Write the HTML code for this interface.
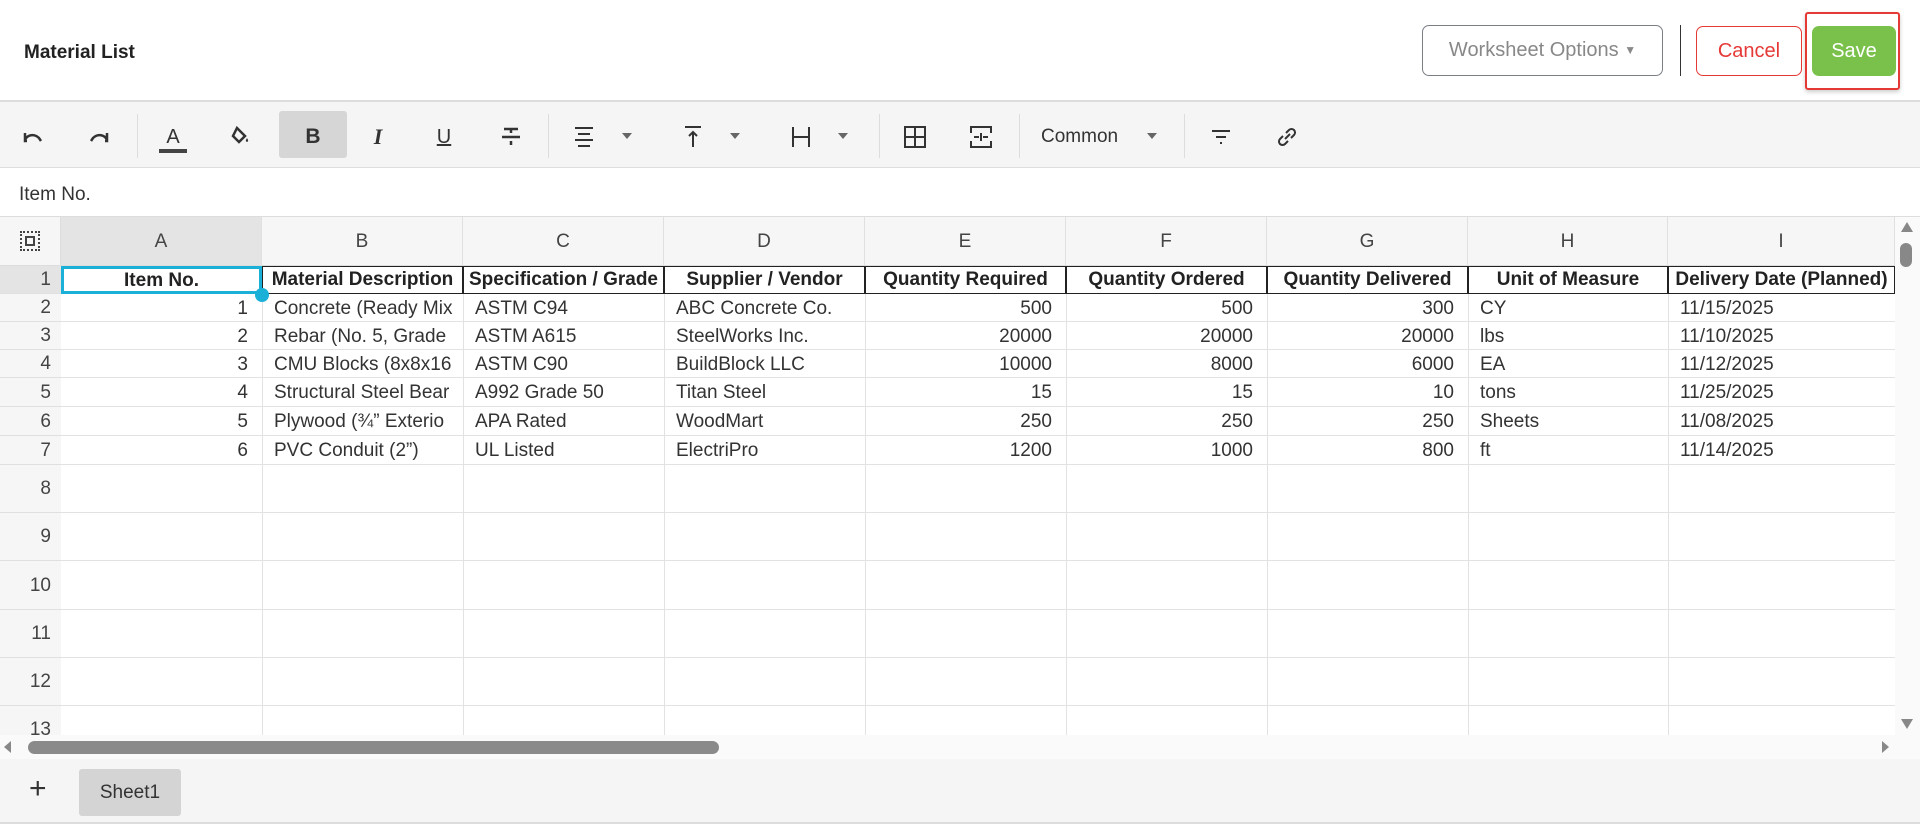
<!DOCTYPE html>
<html><head><meta charset="utf-8"><style>
*{box-sizing:border-box;margin:0;padding:0}
body{width:1920px;height:827px;overflow:hidden;background:#fff;font-family:"Liberation Sans",Arial,sans-serif;color:#333;position:relative}
.a{position:absolute}
.ic{position:absolute;top:122px;width:30px;height:30px;display:flex;align-items:center;justify-content:center}
.sep{position:absolute;top:114px;width:1px;height:44px;background:#ddd}
.car{position:absolute;top:133px;width:0;height:0;border-left:5px solid transparent;border-right:5px solid transparent;border-top:6px solid #666}
.ch{position:absolute;top:217px;height:49px;line-height:49px;text-align:center;font-size:19px;color:#444;border-right:1px solid #e0e0e0;background:#f6f6f6;border-bottom:1px solid #ddd}
.rh{position:absolute;left:0;width:61px;text-align:right;padding-right:10px;font-size:19px;color:#444;background:#f6f6f6;border-bottom:1px solid #e0e0e0}
.c{position:absolute;font-size:19px;color:#333;white-space:nowrap;overflow:hidden;padding:0 12px}
.h{font-weight:bold;text-align:center;padding:0;border:1.5px solid #222;color:#222}
.r{text-align:right}
.vl{position:absolute;top:266px;width:1px;height:470px;background:#e2e2e2}
.hl{position:absolute;left:61px;width:1834px;height:1px;background:#e2e2e2}
</style></head><body>
<div class="a" style="left:24px;top:42px;font-size:19px;font-weight:bold;color:#222">Material List</div>
<div class="a" style="left:1422px;top:25px;width:241px;height:51px;border:1px solid #7a7f86;border-radius:7px;font-size:20px;color:#888;line-height:49px;text-align:center">Worksheet Options <span style="font-size:12px;position:relative;top:-2px">▼</span></div>
<div class="a" style="left:1680px;top:25px;width:1px;height:51px;background:#333"></div>
<div class="a" style="left:1696px;top:26px;width:106px;height:50px;border:1px solid #e53935;border-radius:7px;font-size:20px;color:#e53935;line-height:48px;text-align:center">Cancel</div>
<div class="a" style="left:1805px;top:12px;width:95px;height:78px;border:2px solid #e53935;border-radius:3px;box-shadow:0 2px 4px rgba(0,0,0,.2)"></div>
<div class="a" style="left:1812px;top:26px;width:84px;height:50px;background:#7ac14b;border-radius:7px;font-size:20px;color:#fff;line-height:50px;text-align:center">Save</div>

<div class="a" style="left:0;top:100px;width:1920px;height:68px;background:#f5f5f5;border-top:2px solid #ddd;border-bottom:1px solid #ddd"></div>
<div class="ic" style="left:18px"><svg width="26" height="20" viewBox="0 0 26 20"><path d="M5 6v8h2M5 13c2-5 9-7 14-2l2 3" stroke="#333" stroke-width="2.5" fill="none"/></svg></div>
<div class="ic" style="left:84px"><svg width="26" height="20" viewBox="0 0 26 20"><path d="M21 6v8h-2M21 13c-2-5-9-7-14-2l-2 3" stroke="#333" stroke-width="2.5" fill="none"/></svg></div>
<div class="sep" style="left:137px"></div>
<div class="ic" style="left:158px;font-size:20px;color:#333">A<div class="a" style="left:1px;top:27px;width:28px;height:4px;background:#444"></div></div>
<div class="ic" style="left:224px"><svg width="24" height="24" viewBox="0 0 24 24"><path d="M10 3l8 8-6 6-6-6z" stroke="#333" stroke-width="2.5" fill="none"/><path d="M20 13c1 2 2 3 0 4-2-1-1-2 0-4z" fill="#333"/></svg></div>
<div class="a" style="left:279px;top:111px;width:68px;height:47px;background:#d6d6d6;border-radius:3px"></div>
<div class="ic" style="left:298px;font-size:21px;font-weight:bold;color:#333">B</div>
<div class="ic" style="left:363px;font-size:22px;font-style:italic;font-weight:bold;font-family:'Liberation Serif',serif;color:#333">I</div>
<div class="ic" style="left:429px;font-size:20px;color:#333;text-decoration:underline">U</div>
<div class="ic" style="left:496px"><svg width="24" height="24" viewBox="0 0 24 24"><path d="M5 4h14M12 4v4M3 12h18M12 16v4" stroke="#333" stroke-width="2.5"/></svg></div>
<div class="sep" style="left:548px"></div>
<div class="ic" style="left:569px"><svg width="24" height="24" viewBox="0 0 24 24"><path d="M3 3h18M6 9h12M3 15h18M6 21h12" stroke="#333" stroke-width="2"/></svg></div>
<div class="car" style="left:622px"></div>
<div class="ic" style="left:678px"><svg width="24" height="24" viewBox="0 0 24 24"><path d="M4 2h16M12 22V7M8 11l4-4 4 4" stroke="#333" stroke-width="2" fill="none"/></svg></div>
<div class="car" style="left:730px"></div>
<div class="ic" style="left:786px"><svg width="24" height="24" viewBox="0 0 24 24"><path d="M4 2v20M20 2v20M4 12h16" stroke="#333" stroke-width="2"/></svg></div>
<div class="car" style="left:838px"></div>
<div class="sep" style="left:879px"></div>
<div class="ic" style="left:900px"><svg width="24" height="24" viewBox="0 0 24 24"><rect x="2" y="2" width="20" height="20" stroke="#333" stroke-width="2" fill="none"/><path d="M12 2v20M2 12h20" stroke="#333" stroke-width="2"/></svg></div>
<div class="ic" style="left:966px"><svg width="24" height="24" viewBox="0 0 24 24"><path d="M2 8V2h20v6M2 16v6h20v-6M5 12h5M14 12h5M12 8v8" stroke="#333" stroke-width="2" fill="none"/></svg></div>
<div class="sep" style="left:1019px"></div>
<div class="a" style="left:1041px;top:126px;font-size:19px;color:#333">Common</div>
<div class="car" style="left:1147px"></div>
<div class="sep" style="left:1184px"></div>
<div class="ic" style="left:1206px"><svg width="24" height="24" viewBox="0 0 24 24"><path d="M3 6h18M7 12h10M11 18h2" stroke="#333" stroke-width="2"/></svg></div>
<div class="ic" style="left:1272px"><svg width="24" height="24" viewBox="0 0 24 24"><path d="M10 14l5-5M8 11l-3 3a3.5 3.5 0 005 5l3-3M16 13l3-3a3.5 3.5 0 00-5-5l-3 3" stroke="#333" stroke-width="2" fill="none"/></svg></div>

<div class="a" style="left:19px;top:184px;font-size:19px;color:#333">Item No.</div>
<div class="a" style="left:0;top:216px;width:1920px;height:1px;background:#ddd"></div>

<div class="a" style="left:0;top:217px;width:61px;height:49px;background:#f6f6f6;border-right:1px solid #ddd;border-bottom:1px solid #ddd"></div>
<div class="a" style="left:20px;top:231px;width:20px;height:20px;border:2px dotted #444"></div>
<div class="a" style="left:25px;top:236px;width:10px;height:10px;border:2px solid #444"></div>
<div class="ch" style="left:61px;width:201px;background:#e4e4e4">A</div>
<div class="ch" style="left:262px;width:201px">B</div>
<div class="ch" style="left:463px;width:201px">C</div>
<div class="ch" style="left:664px;width:201px">D</div>
<div class="ch" style="left:865px;width:201px">E</div>
<div class="ch" style="left:1066px;width:201px">F</div>
<div class="ch" style="left:1267px;width:201px">G</div>
<div class="ch" style="left:1468px;width:200px">H</div>
<div class="ch" style="left:1668px;width:227px">I</div>

<div class="rh" style="top:266px;height:28px;line-height:28px;background:#e4e4e4">1</div>
<div class="rh" style="top:294px;height:28px;line-height:28px">2</div>
<div class="rh" style="top:322px;height:28px;line-height:28px">3</div>
<div class="rh" style="top:350px;height:28px;line-height:28px">4</div>
<div class="rh" style="top:378px;height:29px;line-height:29px">5</div>
<div class="rh" style="top:407px;height:29px;line-height:29px">6</div>
<div class="rh" style="top:436px;height:29px;line-height:29px">7</div>
<div class="rh" style="top:465px;height:48px;line-height:48px">8</div>
<div class="rh" style="top:513px;height:48px;line-height:48px">9</div>
<div class="rh" style="top:561px;height:49px;line-height:49px">10</div>
<div class="rh" style="top:610px;height:48px;line-height:48px">11</div>
<div class="rh" style="top:658px;height:48px;line-height:48px">12</div>
<div class="rh" style="top:706px;height:48px;line-height:48px">13</div>

<div class="vl" style="left:262px"></div><div class="vl" style="left:463px"></div><div class="vl" style="left:664px"></div><div class="vl" style="left:865px"></div><div class="vl" style="left:1066px"></div><div class="vl" style="left:1267px"></div><div class="vl" style="left:1468px"></div><div class="vl" style="left:1668px"></div>
<div class="hl" style="top:321px"></div><div class="hl" style="top:349px"></div><div class="hl" style="top:377px"></div><div class="hl" style="top:406px"></div><div class="hl" style="top:435px"></div><div class="hl" style="top:464px"></div>
<div class="hl" style="top:512px"></div><div class="hl" style="top:560px"></div><div class="hl" style="top:609px"></div><div class="hl" style="top:657px"></div><div class="hl" style="top:705px"></div>

<div class="c h" style="left:262px;top:266px;width:201px;height:28px;line-height:25px">Material Description</div>
<div class="c h" style="left:463px;top:266px;width:201px;height:28px;line-height:25px">Specification / Grade</div>
<div class="c h" style="left:664px;top:266px;width:201px;height:28px;line-height:25px">Supplier / Vendor</div>
<div class="c h" style="left:865px;top:266px;width:201px;height:28px;line-height:25px">Quantity Required</div>
<div class="c h" style="left:1066px;top:266px;width:201px;height:28px;line-height:25px">Quantity Ordered</div>
<div class="c h" style="left:1267px;top:266px;width:201px;height:28px;line-height:25px">Quantity Delivered</div>
<div class="c h" style="left:1468px;top:266px;width:200px;height:28px;line-height:25px">Unit of Measure</div>
<div class="c h" style="left:1668px;top:266px;width:227px;height:28px;line-height:25px">Delivery Date (Planned)</div>
<div class="c h" style="left:61px;top:266px;width:201px;height:28px;line-height:23px;border:3px solid #1ab0d8">Item No.</div>
<div class="a" style="left:255px;top:288px;width:14px;height:14px;border-radius:50%;background:#1ab0d8"></div>

<div id="rows" style="position:absolute;left:0;top:0"></div>
<script>
var d=[["1","Concrete (Ready Mix","ASTM C94","ABC Concrete Co.","500","500","300","CY","11/15/2025"],
["2","Rebar (No. 5, Grade","ASTM A615","SteelWorks Inc.","20000","20000","20000","lbs","11/10/2025"],
["3","CMU Blocks (8x8x16","ASTM C90","BuildBlock LLC","10000","8000","6000","EA","11/12/2025"],
["4","Structural Steel Bear","A992 Grade 50","Titan Steel","15","15","10","tons","11/25/2025"],
["5","Plywood (¾” Exterio","APA Rated","WoodMart","250","250","250","Sheets","11/08/2025"],
["6","PVC Conduit (2”)","UL Listed","ElectriPro","1200","1000","800","ft","11/14/2025"]];
var xs=[61,262,463,664,865,1066,1267,1468,1668],ws=[201,201,201,201,201,201,201,200,227],ys=[294,322,350,378,407,436],h="";
d.forEach(function(r,i){r.forEach(function(v,j){var rt=(j==0||(j>=4&&j<=6));h+='<div class="c'+(rt?' r':'')+'" style="left:'+xs[j]+'px;top:'+ys[i]+'px;width:'+ws[j]+'px;height:28px;line-height:30px'+(rt?';padding-right:14px':'')+'">'+v+'</div>'})});
document.getElementById('rows').innerHTML=h;
</script>

<div class="a" style="left:1895px;top:217px;width:25px;height:518px;background:#fafafa"></div>
<div class="a" style="left:1901px;top:222px;width:0;height:0;border-left:6px solid transparent;border-right:6px solid transparent;border-bottom:10px solid #888"></div>
<div class="a" style="left:1900px;top:243px;width:12px;height:24px;border-radius:6px;background:#888"></div>
<div class="a" style="left:1901px;top:719px;width:0;height:0;border-left:6px solid transparent;border-right:6px solid transparent;border-top:10px solid #888"></div>
<div class="a" style="left:0;top:735px;width:1920px;height:24px;background:#fafafa"></div>
<div class="a" style="left:4px;top:741px;width:0;height:0;border-top:6px solid transparent;border-bottom:6px solid transparent;border-right:7px solid #888"></div>
<div class="a" style="left:28px;top:741px;width:691px;height:13px;border-radius:7px;background:#8a8a8a"></div>
<div class="a" style="left:1882px;top:741px;width:0;height:0;border-top:6px solid transparent;border-bottom:6px solid transparent;border-left:7px solid #888"></div>
<div class="a" style="left:0;top:759px;width:1920px;height:65px;background:#f5f5f5;border-bottom:2px solid #ddd"></div>
<div class="a" style="left:29px;top:772px;font-size:30px;color:#333;font-weight:300">+</div>
<div class="a" style="left:79px;top:769px;width:102px;height:47px;background:#d4d4d4;border-radius:3px;font-size:19px;line-height:47px;text-align:center;color:#333">Sheet1</div>
</body></html>
